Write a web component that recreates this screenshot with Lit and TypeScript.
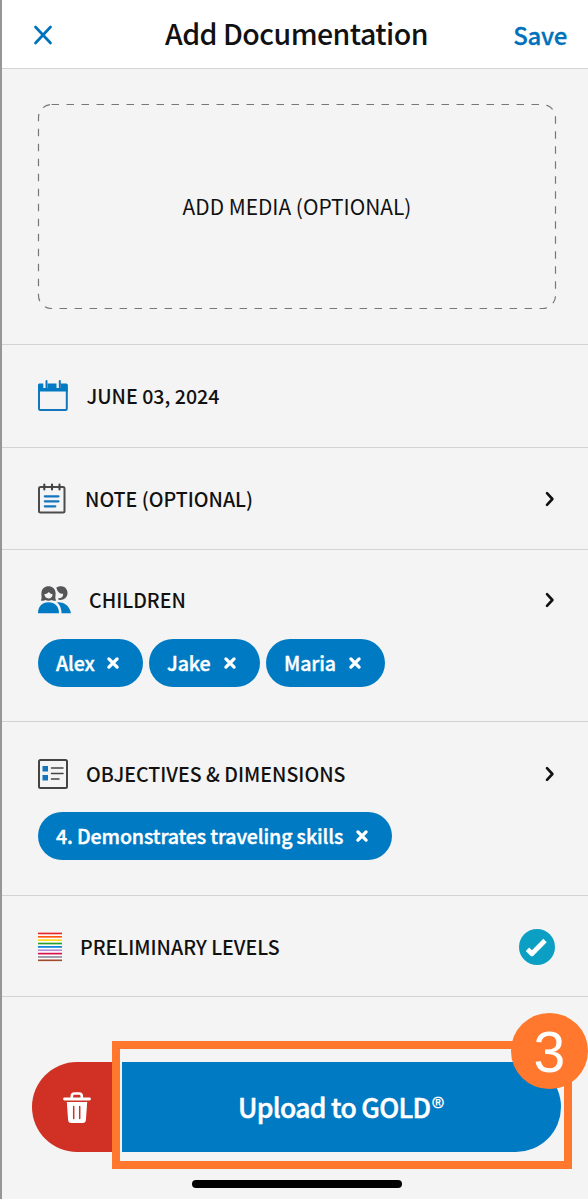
import { LitElement, html, css, svg } from "lit";
import { customElement } from "lit/decorators.js";

const remove = html`<svg class="rm" viewBox="0 0 14 14" width="14" height="14"><path d="M2.9 2.9l8.2 8.2M11.1 2.9l-8.2 8.2" /></svg>`;
const chevron = html`<svg class="chev" viewBox="0 0 12 18" width="12" height="18"><path d="M3 3.2l5.4 5.8L3 14.8" /></svg>`;

const stripes = ["#e02a2a", "#ff5a10", "#ffdc20", "#2b9e28", "#0a84d8", "#b48fd4", "#d8104c", "#8f8fa0", "#a04a2c"];

@customElement("app-root")
export class AppRoot extends LitElement {
  static styles = css`
    :host { display: block; }
    * { box-sizing: border-box; }
    svg { display: block; flex: none; }
    .screen {
      position: relative; width: 588px; height: 1199px; overflow: hidden;
      background: #f4f4f4; border-left: 2px solid #969696; color: #111;
      font-family: "Noto Sans CJK SC", "Noto Sans CJK JP", sans-serif;
      font-size: 19.6px; font-weight: 500; line-height: 28px; white-space: nowrap;
      display: flex; flex-direction: column;
    }
    header {
      height: 69px; flex: none; background: #fff; border-bottom: 1px solid #d4d4d4;
      display: flex; align-items: center; padding: 2px 21px 0 31px;
    }
    h1 { margin: 0 0 0 112px; flex: 1; font-size: 28.5px; font-weight: 500; line-height: 40px; padding-bottom: 4px; letter-spacing: -0.53px; }
    .save { color: #0072bc; font-size: 24px; font-weight: 500; line-height: 34px; padding-bottom: 1px; letter-spacing: -0.3px; -webkit-text-stroke: 0.3px #0072bc; }
    .x path { fill: none; stroke: #0072bc; stroke-width: 2.7; stroke-linecap: round; }
    section { flex: none; border-bottom: 1.5px solid #d3d3d3; padding: 0 32px 0 36px; }
    .media { height: 276px; padding: 35px 0 0 35px; }
    .drop { width: 520px; height: 206px; display: grid; place-items: center; font-weight: 400; font-size: 20.9px; }
    .drop svg { grid-area: 1 / 1; }
    .drop rect { fill: none; stroke: #777; stroke-width: 1.2; stroke-dasharray: 7.5 7.5; }
    .drop span { grid-area: 1 / 1; padding-bottom: 2px; }
    .row { display: flex; align-items: center; height: 100px; }
    .row .label { flex: 1; }
    .date { height: 103px; } .note { height: 102px; }
    .kids { height: 172px; } .goals { height: 174px; } .levels { height: 101px; padding-right: 33px; }
    .date .row, .note .row { height: 102px; }
    .kids .row { height: 99px; } .goals .row { height: 103px; } .levels .row { height: 101px; }
    .chips { display: flex; gap: 6px; margin-top: -10px; }
    .goals .chips { margin-top: -13px; }
    .chip {
      height: 47.5px; border-radius: 24px; background: #007ac2; color: #fff;
      display: flex; align-items: center; justify-content: space-between; padding: 0 23px 0 18px;
      letter-spacing: -0.13px; -webkit-text-stroke: 0.4px #fff;
    }
    .rm path { fill: none; stroke: #fff; stroke-width: 3.3; stroke-linecap: round; }
    .chev path { fill: none; stroke: #111; stroke-width: 2.6; stroke-linecap: round; stroke-linejoin: round; }
    footer { display: flex; padding: 65px 0 0 30px; }
    .trash { width: 90px; height: 90px; background: #d13124; border-radius: 45px 0 0 45px; display: flex; align-items: center; padding-left: 31px; }
    .upload {
      width: 439px; height: 90px; background: #007ac2; border-radius: 0 45px 45px 0; color: #fff;
      display: flex; align-items: center; padding-left: 116px; font-size: 26.5px; line-height: 36px;
      letter-spacing: -0.68px; -webkit-text-stroke: 0.5px #fff;
    }
    .upload sup { font-size: 26.5px; line-height: 20px; vertical-align: 0; margin-left: 1px; -webkit-text-stroke: 0; }
    .frame { position: absolute; left: 109.5px; top: 1041px; width: 460px; height: 128px; border: 8.5px solid #ff782d; }
    .gap { position: absolute; left: 117px; top: 1049px; width: 3px; height: 112px; background: #f4f4f4; }
    .badge {
      position: absolute; left: 508.5px; top: 1013px; width: 77.5px; height: 76px; border-radius: 50%;
      background: #ff782d; color: #fff; font: 400 57px/78px "Liberation Sans", Arial, sans-serif; text-align: center;
    }
    .home { position: absolute; left: 190px; top: 1180px; width: 210px; height: 8px; border-radius: 4px; background: #000; }
  `;

  private label(text: string) {
    return html`<div class="label">${text}</div>`;
  }

  render() {
    return html`<div class="screen">
      <header>
        <svg class="x" width="20" height="22" viewBox="0 0 20 22"><path d="M2.5 3l15 16M17.5 3l-15 16" /></svg>
        <h1>Add Documentation</h1>
        <div class="save">Save</div>
      </header>
      <section class="media">
        <div class="drop">
          <svg width="520" height="206"><rect x="1.500" y="0.500" width="517" height="204" rx="13" /></svg>
          <span>ADD MEDIA (OPTIONAL)</span>
        </div>
      </section>
      <section class="date"><div class="row">
        <svg width="48.500" height="32" viewBox="0 0 48.500 32">
          <rect x="1" y="5" width="27.800" height="25" rx="1.200" fill="none" stroke="#1375bd" stroke-width="2" />
          <path d="M1 3.500h27.600l1 1V11.500H0V4.500z" fill="#007ac2" />
          <path d="M5.300 0h4.200v8H5.300zM18.500 0h4.200v8h-4.200z" fill="#f4f4f4" />
          <path d="M8.500 1v6.300M21.800 1v6.300" stroke="#1375bd" stroke-width="2" stroke-linecap="round" />
        </svg>
        ${this.label("JUNE 03, 2024")}
      </div></section>
      <section class="note"><div class="row">
        <svg width="47" height="32" viewBox="0 0 47 32">
          <rect x="1" y="4" width="25.500" height="25.500" rx="1.500" fill="none" stroke="#4b4b4d" stroke-width="2" />
          <path d="M6.300 1.500v5M14 1.500v5M21.500 1.500v5" stroke="#444" stroke-width="2.100" stroke-linecap="round" />
          <path d="M6.800 13.300h13.700M6.800 18.300h13.700M6.800 23.300h10.500" stroke="#1375bd" stroke-width="2.200" stroke-linecap="round" />
        </svg>
        ${this.label("NOTE (OPTIONAL)")}${chevron}
      </div></section>
      <section class="kids"><div class="row">
        <svg width="51" height="28" viewBox="0 0 51 28">
          <path d="M18.300 1.500C20 .4 22 .1 23.500.2c3.800.2 6 3.200 6 6.900 0 4.400-3.300 7.200-8.200 6.900-.7 0-1-.6-1.100-1.700 3 .2 5.100-1.500 5-4.600-3 .3-5.600-1.200-6.900-6.200z" fill="#555557" />
          <path d="M2.800 14.400C4.500 12 3 9.500 3.500 6.300 4 2.500 6.700.2 10.500.2s6.500 2.300 7 6.100c.5 3.200-1 5.700.7 8.100-1.600.7-3.400.6-4.500-.3-2 .9-4.400.9-6.400 0-1.100.9-2.900 1-4.500.3z" fill="#555557" />
          <path d="M6.400 8.100c1.900-.1 3.500-.9 4.500-2.100.8 1.200 2 2 3.700 2.200 0 2.600-1.800 4.300-4.100 4.300S6.400 10.700 6.400 8.100z" fill="#f4f4f4" />
          <path d="M19 16.200c7.800-.5 12.500 3.800 14 11h-9.400c-.2-4.700-1.500-8-4.600-11z" fill="#007ac2" />
          <path d="M0 27.200C0 20.500 4 16.200 10.500 16.200S21 20.500 21 27.200z" fill="#007ac2" />
        </svg>
        ${this.label("CHILDREN")}${chevron}
      </div>
      <div class="chips">
        <div class="chip" style="width:105px">Alex${remove}</div>
        <div class="chip" style="width:111px">Jake${remove}</div>
        <div class="chip" style="width:118.500px">Maria${remove}</div>
      </div></section>
      <section class="goals"><div class="row">
        <svg width="48" height="30" viewBox="0 0 48 30">
          <rect x="1" y="1" width="28" height="28" rx="1.500" fill="none" stroke="#444" stroke-width="2" />
          <path d="M4.500 7h5.500v5.500H4.500zM4.500 16h5.500v5.500H4.500z" fill="#1375bd" />
          <path d="M13.500 9h11.500M13.500 14.500h11.500M13.500 20h7.500" stroke="#444" stroke-width="1.500" stroke-linecap="round" />
        </svg>
        ${this.label("OBJECTIVES & DIMENSIONS")}${chevron}
      </div>
      <div class="chips"><div class="chip" style="width:354px">4. Demonstrates traveling skills${remove}</div></div></section>
      <section class="levels"><div class="row">
        <svg width="42" height="30" viewBox="0 0 42 30">
          <rect width="24" height="30" y="0" fill="#fff" />
          ${stripes.map((c, i) => svg`<rect x="0" y=${0.6 + i * 3.36} width="24" height="1.700" fill=${c} />`)}
        </svg>
        ${this.label("PRELIMINARY LEVELS")}
        <svg width="36" height="36" viewBox="0 0 36 36"><circle cx="18" cy="18" r="18" fill="#0a9fc3" /><path d="M8.500 20.300l4.400 4.400L26 11.500" fill="none" stroke="#fff" stroke-width="4.800" stroke-linejoin="round" /></svg>
      </div></section>
      <footer>
        <div class="trash">
          <svg width="28" height="31" viewBox="0 0 28 31">
            <path d="M8.800 6V4.200Q8.800 1.500 11.500 1.500h4.600Q18.800 1.500 18.800 4.200V6" fill="none" stroke="#fff" stroke-width="2.600" />
            <path d="M1.500 7h25" stroke="#fff" stroke-width="2.800" stroke-linecap="round" />
            <path d="M3.800 10h20.400l-1.300 18Q22.700 31 19.700 31H8.300Q5.300 31 5.100 28z" fill="#fff" />
            <path d="M10.700 14.500v12M16.700 14.500v12" stroke="#d13124" stroke-width="1.500" stroke-linecap="round" />
          </svg>
        </div>
        <div class="upload"><span>Upload to GOLD<sup>®</sup></span></div>
      </footer>
      <div class="gap"></div>
      <div class="frame"></div>
      <div class="badge">3</div>
      <div class="home"></div>
    </div>`;
  }
}
